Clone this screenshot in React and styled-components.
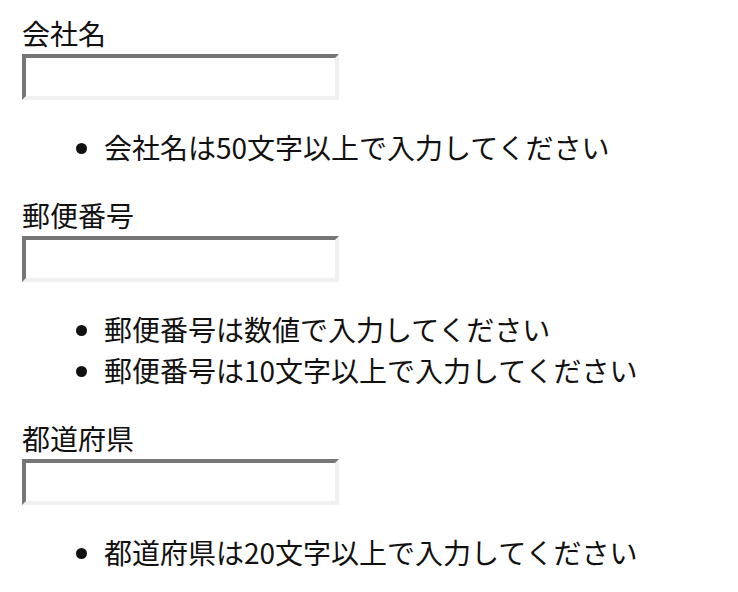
import styled, { createGlobalStyle } from 'styled-components';

const GlobalStyle = createGlobalStyle`
  html, body {
    margin: 0;
    padding: 0;
    background: #ffffff;
  }
  body {
    font-family: "Noto Sans CJK JP", "Noto Sans", sans-serif;
    color: #111111;
  }
`;

const fields = [
  { label: '会社名', errors: ['会社名は50文字以上で入力してください'] },
  { label: '郵便番号', errors: ['郵便番号は数値で入力してください', '郵便番号は10文字以上で入力してください'] },
  { label: '都道府県', errors: ['都道府県は20文字以上で入力してください'] },
];

export default function App() {
  return (
    <>
      <GlobalStyle />
      <StyledForm onSubmit={e => e.preventDefault()}>
        {fields.map(field => (
          <StyledField key={field.label}>
            <StyledLabel>{field.label}</StyledLabel>
            <StyledInput type='text' />
            <StyledErrors>
              {field.errors.map(err => (
                <li key={err}>{err}</li>
              ))}
            </StyledErrors>
          </StyledField>
        ))}
      </StyledForm>
    </>
  );
}

const StyledForm = styled.form`
padding: 13px 0 0 22px;
font-size: 28px;
line-height: 41px;
`
const StyledField = styled.div`
display: flex;
flex-direction: column;
align-items: flex-start;
`
const StyledLabel = styled.label`
display: block;
height: 41px;
`
const StyledInput = styled.input`
box-sizing: border-box;
width: 317px;
height: 46px;
margin: 0;
padding: 0 6px;
font: inherit;
background-color: #ffffff;
border-width: 4px;
border-style: solid;
border-color: #767676 #f0f0f0 #f0f0f0 #767676;
outline: none;
`
const StyledErrors = styled.ul`
margin: 27px 0;
padding-left: 82px;
list-style: disc;
`
